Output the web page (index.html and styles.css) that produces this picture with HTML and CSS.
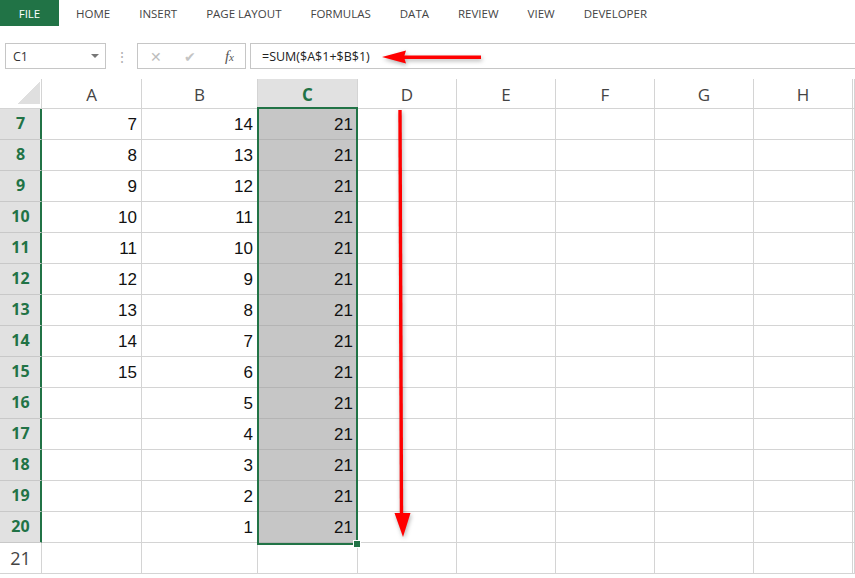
FILE: index.html
```html
<!DOCTYPE html>
<html lang="en">
<head>
    <meta charset="UTF-8">
    <title>Book1 - Excel</title>
    <link rel="stylesheet" href="styles.css">
</head>
<body>
    <div class="tabs">
        <span class="file">FILE</span>
        <span class="tab">HOME</span>
        <span class="tab">INSERT</span>
        <span class="tab">PAGE LAYOUT</span>
        <span class="tab">FORMULAS</span>
        <span class="tab">DATA</span>
        <span class="tab">REVIEW</span>
        <span class="tab">VIEW</span>
        <span class="tab">DEVELOPER</span>
    </div>

    <div class="formula-bar">
        <div class="name-box">C1<span class="drop"></span></div>
        <div class="grip">&#8942;</div>
        <div class="fx-buttons">
            <span class="btn-x">&#10005;</span>
            <span class="btn-ok">&#10004;</span>
            <span class="btn-fx"><i>f</i><small>x</small></span>
        </div>
        <div class="formula">=SUM($A$1+$B$1)</div>
    </div>

    <div class="sheet">
        <table class="grid">
            <colgroup>
                <col style="width:42px"><col style="width:100px"><col style="width:116px"><col style="width:100px">
                <col style="width:99px"><col style="width:99px"><col style="width:99px"><col style="width:99px"><col style="width:99px"><col>
            </colgroup>
            <tr class="head">
                <th class="corner"><div class="tri"></div></th>
                <th>A</th><th>B</th><th class="sel-col">C</th><th>D</th><th>E</th><th>F</th><th>G</th><th>H</th><th></th>
            </tr>
            <tr><th class="sel">7</th><td>7</td><td>14</td><td class="on">21</td><td></td><td></td><td></td><td></td><td></td><td></td></tr>
            <tr><th class="sel">8</th><td>8</td><td>13</td><td class="on">21</td><td></td><td></td><td></td><td></td><td></td><td></td></tr>
            <tr><th class="sel">9</th><td>9</td><td>12</td><td class="on">21</td><td></td><td></td><td></td><td></td><td></td><td></td></tr>
            <tr><th class="sel">10</th><td>10</td><td>11</td><td class="on">21</td><td></td><td></td><td></td><td></td><td></td><td></td></tr>
            <tr><th class="sel">11</th><td>11</td><td>10</td><td class="on">21</td><td></td><td></td><td></td><td></td><td></td><td></td></tr>
            <tr><th class="sel">12</th><td>12</td><td>9</td><td class="on">21</td><td></td><td></td><td></td><td></td><td></td><td></td></tr>
            <tr><th class="sel">13</th><td>13</td><td>8</td><td class="on">21</td><td></td><td></td><td></td><td></td><td></td><td></td></tr>
            <tr><th class="sel">14</th><td>14</td><td>7</td><td class="on">21</td><td></td><td></td><td></td><td></td><td></td><td></td></tr>
            <tr><th class="sel">15</th><td>15</td><td>6</td><td class="on">21</td><td></td><td></td><td></td><td></td><td></td><td></td></tr>
            <tr><th class="sel">16</th><td></td><td>5</td><td class="on">21</td><td></td><td></td><td></td><td></td><td></td><td></td></tr>
            <tr><th class="sel">17</th><td></td><td>4</td><td class="on">21</td><td></td><td></td><td></td><td></td><td></td><td></td></tr>
            <tr><th class="sel">18</th><td></td><td>3</td><td class="on">21</td><td></td><td></td><td></td><td></td><td></td><td></td></tr>
            <tr><th class="sel">19</th><td></td><td>2</td><td class="on">21</td><td></td><td></td><td></td><td></td><td></td><td></td></tr>
            <tr><th class="sel">20</th><td></td><td>1</td><td class="on">21</td><td></td><td></td><td></td><td></td><td></td><td></td></tr>
            <tr><th>21</th><td></td><td></td><td></td><td></td><td></td><td></td><td></td><td></td><td></td></tr>
        </table>
        <div class="selection"><span class="handle"></span></div>
    </div>

    <!-- red annotation arrows drawn over the screenshot -->
    <svg class="arrows" width="855" height="578" viewBox="0 0 855 578">
        <g fill="#ff0000" stroke="none">
            <rect x="403" y="55.5" width="78" height="3.5"/>
            <polygon points="382,57 406,50.5 404,57 406,63.5"/>
            <polygon points="398.3,110 401.7,110 403.2,516 399.8,516"/>
            <polygon points="394.5,513 410.5,513 403,537"/>
        </g>
    </svg>
</body>
</html>
```

FILE: styles.css
```css
body {
    margin: 0;
    width: 855px;
    height: 578px;
    overflow: hidden;
    position: relative;
    background: #fff;
    font-family: "Open Sans", "Segoe UI", sans-serif;
    color: #222;
}

/* Ribbon tabs */
.tabs {
    display: flex;
    align-items: center;
    height: 26px;
    font-size: 11.5px;
    color: #444;
}
.tabs .file {
    width: 59px;
    height: 26px;
    background: #217346;
    color: #fff;
    display: flex;
    align-items: center;
    justify-content: center;
}
.tabs .tab {
    margin-left: 29px;
}
.tabs .file + .tab {
    margin-left: 17px;
}

/* Formula bar */
.formula-bar {
    display: flex;
    height: 26px;
    margin-top: 17px;
}
.name-box {
    box-sizing: border-box;
    width: 101px;
    margin-left: 5px;
    border: 1px solid #c6c6c6;
    display: flex;
    align-items: center;
    padding-left: 7px;
    font-size: 12.5px;
    color: #333;
}
.name-box .drop {
    margin-left: auto;
    margin-right: 6px;
    width: 0;
    height: 0;
    border-left: 4px solid transparent;
    border-right: 4px solid transparent;
    border-top: 4px solid #777;
}
.grip {
    width: 31px;
    display: flex;
    align-items: center;
    justify-content: center;
    color: #b0b0b0;
    font-size: 14px;
}
.fx-buttons {
    box-sizing: border-box;
    width: 109px;
    border: 1px solid #c6c6c6;
    display: flex;
    align-items: center;
    color: #bdbdbd;
    font-size: 14px;
}
.btn-x {
    margin-left: 12px;
}
.btn-ok {
    margin-left: 22px;
    color: #c4c4c4;
}
.btn-fx {
    margin-left: auto;
    margin-right: 11px;
    color: #555;
    font-family: "Liberation Serif", serif;
    font-size: 15px;
}
.btn-fx small {
    font-style: italic;
    font-size: 11px;
}
.formula {
    flex: 1;
    margin-left: 4px;
    border: 1px solid #c6c6c6;
    border-right: none;
    display: flex;
    align-items: center;
    padding-left: 11px;
    font-size: 12.5px;
    color: #222;
}

/* Worksheet */
.sheet {
    margin-top: 10px;
    position: relative;
}
.grid {
    table-layout: fixed;
    border-collapse: separate;
    border-spacing: 0;
    width: 855px;
}
.grid th,
.grid td {
    box-sizing: border-box;
    padding: 0;
    border-right: 1px solid #d4d4d4;
    border-bottom: 1px solid #d4d4d4;
    height: 31px;
    white-space: nowrap;
    overflow: hidden;
}
.grid .head th {
    height: 30px;
    font-weight: normal;
    font-size: 17px;
    color: #444;
    text-align: center;
    vertical-align: middle;
    padding-top: 1px;
}
.grid .head th.sel-col {
    background: #e1e1e1;
    color: #217346;
    font-weight: bold;
}
.grid .corner {
    vertical-align: bottom;
}
.grid .corner .tri {
    width: 22px;
    height: 22px;
    margin: 0 1px 2px auto;
    background: linear-gradient(to bottom right, transparent 50%, #dfdfdf 50%);
}
.grid th {
    font-weight: normal;
    font-size: 18px;
    color: #444;
    text-align: center;
}
.grid th.sel {
    background: #e1e1e1;
    color: #217346;
    font-weight: bold;
    font-size: 16px;
    border-bottom-color: #c8c8c8;
    border-right-color: #217346;
    box-shadow: inset -1px 0 0 #217346;
    padding-bottom: 3px;
}
.grid td {
    font-family: "Liberation Sans", Arial, sans-serif;
    font-size: 17px;
    color: #111;
    text-align: right;
    vertical-align: bottom;
    padding: 0 4px 4px 0;
    line-height: 20px;
}
.grid td.on {
    background: #c6c6c6;
    border-bottom-color: #b4b4b4;
}

.selection {
    position: absolute;
    left: 257px;
    top: 28px;
    width: 101px;
    height: 438px;
    box-sizing: border-box;
    border: 2px solid #217346;
    pointer-events: none;
}
.handle {
    position: absolute;
    right: -5px;
    bottom: -5px;
    width: 6px;
    height: 6px;
    background: #217346;
    border: 1px solid #fff;
}

.arrows {
    position: absolute;
    left: 0;
    top: 0;
    filter: drop-shadow(1px 2px 2px rgba(0, 0, 0, 0.3));
}
```
